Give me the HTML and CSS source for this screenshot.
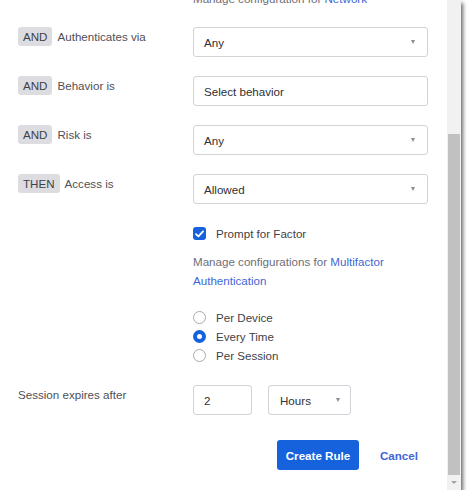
FILE: index.html
```html
<!DOCTYPE html>
<html>
<head>
<meta charset="utf-8">
<link rel="stylesheet" href="styles.css">
</head>
<body>
<div class="window">
  <div class="viewport">
    <div class="content">
      <p class="note cut">Manage configuration for <a class="link">Network</a></p>

      <div class="row">
        <div class="cond"><span class="badge">AND</span><span class="label">Authenticates via</span></div>
        <div class="field select"><span>Any</span><span class="caret"></span></div>
      </div>
      <div class="row">
        <div class="cond"><span class="badge">AND</span><span class="label">Behavior is</span></div>
        <div class="field"><span>Select behavior</span></div>
      </div>
      <div class="row">
        <div class="cond"><span class="badge">AND</span><span class="label">Risk is</span></div>
        <div class="field select"><span>Any</span><span class="caret"></span></div>
      </div>
      <div class="row">
        <div class="cond"><span class="badge">THEN</span><span class="label">Access is</span></div>
        <div class="field select"><span>Allowed</span><span class="caret"></span></div>
      </div>

      <div class="options">
        <div class="check-row">
          <span class="checkbox"><svg width="9" height="8" viewBox="0 0 9 8"><path d="M1 4.2 L3.4 6.4 L8 1.4" fill="none" stroke="#fff" stroke-width="1.8" stroke-linecap="round" stroke-linejoin="round"/></svg></span>
          <span class="opt-text">Prompt for Factor</span>
        </div>
        <p class="note mfa">Manage configurations for <a class="link">Multifactor</a><br><a class="link">Authentication</a></p>
        <div class="radios">
          <div class="radio-row"><span class="radio"></span><span class="opt-text">Per Device</span></div>
          <div class="radio-row"><span class="radio on"></span><span class="opt-text">Every Time</span></div>
          <div class="radio-row"><span class="radio"></span><span class="opt-text">Per Session</span></div>
        </div>
      </div>

      <div class="row session">
        <div class="cond"><span class="label plain">Session expires after</span></div>
        <div class="session-fields">
          <div class="field num"><span>2</span></div>
          <div class="field select hours"><span>Hours</span><span class="caret"></span></div>
        </div>
      </div>

      <div class="actions">
        <button class="btn primary">Create Rule</button>
        <button class="btn cancel">Cancel</button>
      </div>
    </div>
  </div>
  <div class="scrollbar">
    <div class="track"></div>
    <div class="thumb"></div>
    <div class="arrow"><span class="down"></span></div>
  </div>
</div>
</body>
</html>
```

FILE: styles.css
```css
html, body {
  margin: 0;
  padding: 0;
  background: #ffffff;
}
body {
  font-family: "Liberation Sans", Arial, sans-serif;
  font-size: 11.6px;
  color: #4f4f57;
}
.window {
  display: flex;
  width: 461px;
  height: 490px;
  background: #fff;
  overflow: hidden;
  box-shadow: 2px 3px 4px rgba(0, 0, 0, 0.6);
}
.viewport {
  flex: 1;
  overflow: hidden;
}
.content {
  padding: 0 19px 0 18px;
}
.note {
  margin: 0;
  line-height: 19px;
  color: #6e6e78;
}
.link {
  color: #3f66d6;
  text-decoration: none;
}
.cut {
  margin: -11px 0 19px 175px;
}
.row {
  display: flex;
  align-items: flex-start;
  margin-bottom: 19px;
}
.cond {
  width: 175px;
  display: flex;
  align-items: center;
  line-height: 19px;
}
.badge {
  background: #dcdce1;
  color: #3f3f47;
  border-radius: 3px;
  padding: 0 5px;
  line-height: 19px;
  margin-right: 5px;
}
.label {
  color: #4f4f57;
}
.field {
  width: 235px;
  height: 30px;
  box-sizing: border-box;
  border: 1px solid #d2d2d8;
  border-radius: 3px;
  display: flex;
  align-items: center;
  justify-content: space-between;
  padding: 0 12px 0 10px;
  color: #2f2f35;
}
.caret {
  width: 0;
  height: 0;
  border-left: 2.5px solid transparent;
  border-right: 2.5px solid transparent;
  border-top: 4px solid #8a8a90;
}
.options {
  margin-left: 175px;
  padding-top: 1px;
  margin-bottom: 20px;
}
.check-row, .radio-row {
  display: flex;
  align-items: center;
  line-height: 19px;
}
.checkbox {
  width: 13px;
  height: 13px;
  box-sizing: border-box;
  background: #1662dd;
  border-radius: 3px;
  display: flex;
  align-items: center;
  justify-content: center;
  margin-right: 10px;
}
.opt-text {
  color: #3f3f47;
}
.mfa {
  margin-top: 9px;
}
.radios {
  margin-top: 18px;
}
.radio {
  width: 13px;
  height: 13px;
  box-sizing: border-box;
  border: 1px solid #a9a9b0;
  border-radius: 50%;
  margin-right: 10px;
  background: #fff;
}
.radio.on {
  border: 4px solid #1662dd;
}
.session {
  margin-bottom: 25px;
}
.session-fields {
  display: flex;
  gap: 16px;
}
.num {
  width: 59px;
}
.hours {
  width: 83px;
  padding: 0 10px 0 11px;
}
.actions {
  display: flex;
  justify-content: flex-end;
  gap: 11px;
}
.btn {
  font-family: "Liberation Sans", Arial, sans-serif;
  font-size: 11.6px;
  font-weight: bold;
  height: 30px;
  border: none;
  border-radius: 3px;
  cursor: pointer;
}
.primary {
  background: #1662dd;
  color: #fff;
  width: 82px;
  padding: 0;
}
.cancel {
  background: transparent;
  color: #3f66d6;
  padding: 0 10px;
}
.scrollbar {
  width: 14px;
  display: flex;
  flex-direction: column;
  background: #f1f1f1;
}
.track {
  height: 134px;
}
.thumb {
  flex: 1;
  background: #c1c1c1;
  margin: 0 1px 0 1px;
}
.arrow {
  height: 15px;
  display: flex;
  align-items: center;
  justify-content: center;
}
.down {
  width: 0;
  height: 0;
  border-left: 3px solid transparent;
  border-right: 3px solid transparent;
  border-top: 3px solid #a3a3a3;
}
```
